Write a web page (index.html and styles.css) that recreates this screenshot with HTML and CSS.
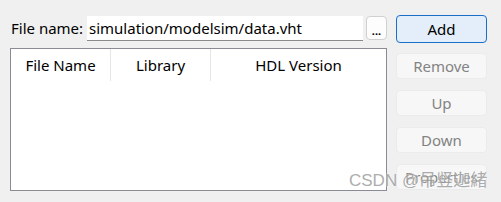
FILE: index.html
```html
<!DOCTYPE html>
<html lang="en">
<head>
    <meta charset="UTF-8">
    <title>Add Files</title>
    <link rel="stylesheet" href="styles.css">
</head>
<body>
    <div class="dlg">
        <div class="left">
            <div class="file-row">
                <label for="fname">File name:</label>
                <input type="text" id="fname" class="fname" value="simulation/modelsim/data.vht">
                <button class="browse">...</button>
            </div>
            <div class="list">
                <div class="list-head">
                    <div class="col col-name">File Name</div>
                    <div class="col col-lib">Library</div>
                    <div class="col col-hdl">HDL Version</div>
                </div>
            </div>
        </div>
        <div class="btns">
            <button class="btn btn-add">Add</button>
            <button class="btn" disabled>Remove</button>
            <button class="btn" disabled>Up</button>
            <button class="btn" disabled>Down</button>
            <button class="btn" disabled>Properties</button>
        </div>
    </div>
    <div class="mark">CSDN @吊竖迦緒</div>
</body>
</html>
```

FILE: styles.css
```css
body {margin: 0; background: #f0f0f0; font-family: "Noto Sans", "Noto Sans CJK SC", sans-serif; font-size: 15px; color: #000; width: 501px; height: 202px; position: relative; overflow: hidden;}
.dlg {display: flex; padding: 14px 0 0 10px; gap: 9px;}
.left {width: 377px;}

.file-row {display: flex; align-items: center; height: 26px; margin-top: 1px;}
.file-row label {padding-left: 1px; width: 76px;}
.fname {width: 276px; height: 25px; box-sizing: border-box; border: none; border-bottom: 1px solid #8a8a8a; background: #fff; font: inherit; padding: 0 0 0 2px; margin: 0; outline: none;}
.browse {width: 21px; height: 24px; margin-left: 3px; box-sizing: border-box; border: 1px solid #d0d0d0; border-radius: 4px; background: #fdfdfd; font: 11px "Noto Sans", sans-serif; font-weight: bold; padding: 4px 0 0; line-height: 1;}

.list {margin-top: 7px; height: 143px; box-sizing: border-box; border: 1px solid #8b8b95; background: #fff;}
.list-head {display: flex; height: 32px; align-items: center;}
.col {text-align: center; height: 32px; line-height: 32px; border-right: 1px solid #e5e5e5; box-sizing: border-box;}
.col-name {width: 100px;}
.col-lib {width: 100px;}
.col-hdl {flex: 1; border-right: none;}

.btns {display: flex; flex-direction: column; width: 91px; padding-top: 1px;}
.btn {height: 26px; margin-top: 11px; box-sizing: border-box; border: 1px solid #ebebeb; border-radius: 4px; background: #f7f7f7; font: inherit; color: #838383; padding: 0; white-space: nowrap;}
.btn-add {height: 28px; margin-top: 0; border-color: #1a6fc9; background: #e3eefa; color: #000;}
.btns .btn:nth-child(2) {margin-top: 10px;}

.mark {position: absolute; left: 349px; top: 171px; font-size: 17px; line-height: 20px; white-space: nowrap; color: #999; text-shadow: 0 0 2px #fff, 0 0 1px #fff; font-family: "Liberation Sans", "Noto Sans CJK SC", sans-serif; opacity: 0.8;}
```
